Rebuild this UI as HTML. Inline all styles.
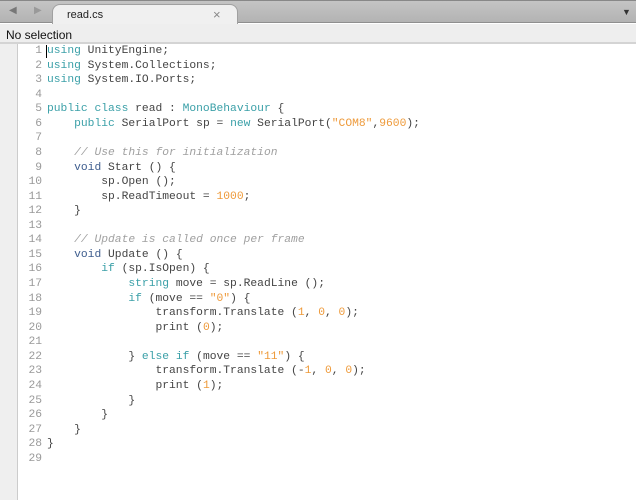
<!DOCTYPE html>
<html><head><style>
body{margin:0;width:636px;height:500px;overflow:hidden;background:#fff;font-family:"Liberation Sans",sans-serif;position:relative}
.tabbar{position:absolute;left:0;top:0;width:636px;height:23px;background:linear-gradient(#c4c4c4,#b3b3b3);border-top:1px solid #888;border-bottom:1px solid #8f8f8f;box-sizing:border-box}
.tab{position:absolute;left:52px;top:3px;width:186px;height:21px;background:#f0f0f0;border-radius:8px 8px 0 0;border:1px solid #a0a0a0;border-bottom:none;box-sizing:border-box}
.tab span{position:absolute;left:14px;top:4px;font-size:11px;color:#222}
.tab b{position:absolute;left:160px;top:2px;font-size:13px;color:#888;font-weight:normal}
.status{position:absolute;left:0;top:24px;width:636px;height:20px;background:#eeeeee;border-bottom:2px solid #d4d4d4;box-sizing:border-box;font-size:12px;color:#111;padding:4px 0 0 6px}
.gut{position:absolute;left:0;top:44px;width:17px;height:456px;background:#efefef;border-right:1px solid #ccc}
.code{position:absolute;left:0;top:44px;font-family:"Liberation Mono",monospace;font-size:11.3px;line-height:14.57px;color:#444}
.l{height:14.57px;white-space:pre}
.n{display:inline-block;width:42px;text-align:right;color:#999;margin-right:5px}
.k{color:#3ba0a8}.v{color:#3e5d8e}.s{color:#ee9a3a}.c{color:#a0a0a0;font-style:italic}
.cur{position:absolute;left:46px;top:45px;width:1px;height:13px;background:#000}
</style></head><body>
<div class="tabbar"><span style="position:absolute;left:9px;top:4px;font-size:10px;color:#777">◀</span><span style="position:absolute;left:34px;top:4px;font-size:10px;color:#999">▶</span>
<div class="tab"><span>read.cs</span><b>×</b></div>
<span style="position:absolute;left:622px;top:6px;font-size:9px;color:#333">▼</span></div>
<div class="status">No selection</div>
<div class="gut"></div>
<div class="code">
<div class="l"><span class="n">1</span><span class="k">using</span> UnityEngine;</div>
<div class="l"><span class="n">2</span><span class="k">using</span> System.Collections;</div>
<div class="l"><span class="n">3</span><span class="k">using</span> System.IO.Ports;</div>
<div class="l"><span class="n">4</span></div>
<div class="l"><span class="n">5</span><span class="k">public class</span> read : <span class="k">MonoBehaviour</span> {</div>
<div class="l"><span class="n">6</span>    <span class="k">public</span> SerialPort sp = <span class="k">new</span> SerialPort(<span class="s">"COM8"</span>,<span class="s">9600</span>);</div>
<div class="l"><span class="n">7</span></div>
<div class="l"><span class="n">8</span>    <span class="c">// Use this for initialization</span></div>
<div class="l"><span class="n">9</span>    <span class="v">void</span> Start () {</div>
<div class="l"><span class="n">10</span>        sp.Open ();</div>
<div class="l"><span class="n">11</span>        sp.ReadTimeout = <span class="s">1000</span>;</div>
<div class="l"><span class="n">12</span>    }</div>
<div class="l"><span class="n">13</span></div>
<div class="l"><span class="n">14</span>    <span class="c">// Update is called once per frame</span></div>
<div class="l"><span class="n">15</span>    <span class="v">void</span> Update () {</div>
<div class="l"><span class="n">16</span>        <span class="k">if</span> (sp.IsOpen) {</div>
<div class="l"><span class="n">17</span>            <span class="k">string</span> move = sp.ReadLine ();</div>
<div class="l"><span class="n">18</span>            <span class="k">if</span> (move == <span class="s">"0"</span>) {</div>
<div class="l"><span class="n">19</span>                transform.Translate (<span class="s">1</span>, <span class="s">0</span>, <span class="s">0</span>);</div>
<div class="l"><span class="n">20</span>                print (<span class="s">0</span>);</div>
<div class="l"><span class="n">21</span></div>
<div class="l"><span class="n">22</span>            } <span class="k">else if</span> (move == <span class="s">"11"</span>) {</div>
<div class="l"><span class="n">23</span>                transform.Translate (-<span class="s">1</span>, <span class="s">0</span>, <span class="s">0</span>);</div>
<div class="l"><span class="n">24</span>                print (<span class="s">1</span>);</div>
<div class="l"><span class="n">25</span>            }</div>
<div class="l"><span class="n">26</span>        }</div>
<div class="l"><span class="n">27</span>    }</div>
<div class="l"><span class="n">28</span>}</div>
<div class="l"><span class="n">29</span></div>
</div>
<div class="cur"></div>
</body></html>
